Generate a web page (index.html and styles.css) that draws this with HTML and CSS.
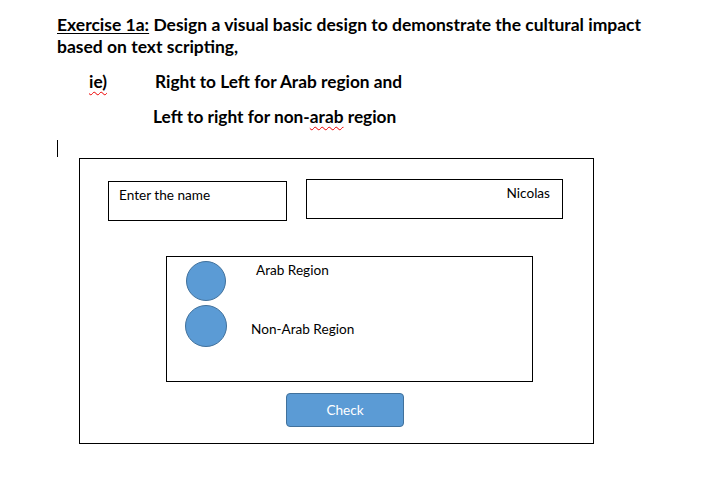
FILE: index.html
```html
<!DOCTYPE html>
<html lang="en">
<head>
  <meta charset="UTF-8" />
  <title>Exercise 1a</title>
  <link rel="stylesheet" href="styles.css">
</head>
<body>
  <div class="page">
    <h1 class="judul"><span class="garis">Exercise 1a:</span> Design a visual basic design to demonstrate the cultural impact based on text scripting,</h1>

    <div class="poin">
      <span class="nomor"><span class="salah">ie)</span></span>
      <span>Right to Left for Arab region and</span>
    </div>
    <div class="poin lanjut">Left to right for non-<span class="salah">arab</span> region</div>

    <div class="kursor"></div>

    <!-- Form design -->
    <div class="form">
      <div class="baris">
        <div class="kotak kotak-label">Enter the name</div>
        <div class="kotak kotak-isi">Nicolas</div>
      </div>

      <div class="region">
        <div class="opsi opsi-1">
          <span class="bulat"></span>
          <span class="teks">Arab Region</span>
        </div>
        <div class="opsi opsi-2">
          <span class="bulat besar"></span>
          <span class="teks">Non-Arab Region</span>
        </div>
      </div>

      <button class="btn-check">Check</button>
    </div>
  </div>
</body>
</html>
```

FILE: styles.css
```css
body {
  margin: 0;
  background: #fff;
  color: #000;
  font-family: Lato, 'Open Sans', sans-serif;
}

.page {
  padding: 14px 0 0 57px;
  width: 600px;
}

.judul {
  margin: 0;
  font-size: 17.5px;
  font-weight: 700;
  line-height: 22px;
}

.garis {
  text-decoration: underline;
  text-underline-offset: 2px;
}

.poin {
  display: flex;
  font-size: 17.3px;
  font-weight: 700;
  margin-top: 14px;
  line-height: 20px;
}

.nomor {
  width: 66px;
  padding-left: 32px;
  flex-shrink: 0;
}

.poin.lanjut {
  display: block;
  margin-top: 15px;
  padding-left: 96px;
}

/* garis merah bergelombang seperti di Word */
.salah {
  text-decoration: underline wavy #e00;
  text-decoration-thickness: 1px;
  text-underline-offset: 3px;
}

.kursor {
  width: 1px;
  height: 17px;
  background: #000;
  margin-top: 13px;
}

.form {
  margin: 1px 0 0 22px;
  width: 513px;
  height: 284px;
  border: 1px solid #000;
  font-size: 13.6px;
}

.baris {
  display: flex;
  align-items: flex-start;
  gap: 19px;
  padding: 20px 0 0 28px;
}

.kotak {
  border: 1px solid #000;
  height: 38px;
  box-sizing: content-box;
}

.kotak-label {
  margin-top: 2px;
  padding: 0 0 0 10px;
  width: 167px;
  line-height: 26px;
}

.kotak-isi {
  width: 243px;
  padding-right: 12px;
  text-align: right;
  line-height: 26px;
}

.region {
  margin: 35px 0 0 86px;
  width: 365px;
  height: 124px;
  border: 1px solid #000;
}

.opsi {
  display: flex;
}

.opsi-1 {
  padding: 4px 0 0 19px;
  align-items: flex-start;
}

.opsi-1 .teks {
  margin-left: 30px;
  line-height: 18px;
}

.opsi-2 {
  padding: 4px 0 0 18px;
  align-items: center;
}

.opsi-2 .teks {
  margin-left: 24px;
  padding-top: 6px;
}

.bulat {
  display: block;
  width: 38px;
  height: 38px;
  border-radius: 50%;
  background: #5b9bd5;
  border: 1px solid #41719c;
}

.bulat.besar {
  width: 40px;
  height: 40px;
}

.btn-check {
  display: block;
  margin: 11px 0 0 206px;
  width: 118px;
  height: 34px;
  background: #5b9bd5;
  border: 1px solid #41719c;
  border-radius: 4px;
  color: #fff;
  font-family: Lato, 'Open Sans', sans-serif;
  font-size: 13.6px;
}
```
